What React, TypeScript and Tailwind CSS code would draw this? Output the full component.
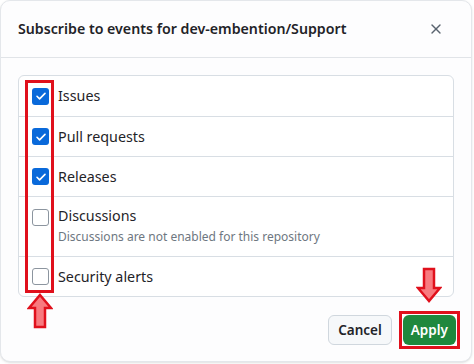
import { X } from "lucide-react";

const items = [
  { label: "Issues", checked: true },
  { label: "Pull requests", checked: true },
  { label: "Releases", checked: true },
  { label: "Discussions", checked: false, note: "Discussions are not enabled for this repository" },
  { label: "Security alerts", checked: false },
];

const Box = ({ checked }: { checked: boolean }) =>
  checked ? (
    <span className="flex h-[17px] w-[17px] shrink-0 items-center justify-center rounded-[3px] bg-[#0969da]">
      <svg width="12" height="12" viewBox="0 0 12 12" fill="none">
        <path d="M2 6.3l2.6 2.6L10 3.4" stroke="white" strokeWidth="1.6" strokeLinecap="round" strokeLinejoin="round" />
      </svg>
    </span>
  ) : (
    <span className="block h-[17px] w-[17px] shrink-0 rounded-[3px] border border-[#8c959f] bg-white" />
  );

const Arrow = ({ down }: { down?: boolean }) => (
  <svg width="26" height="36" viewBox="0 0 26 36" className={down ? "rotate-180" : ""}>
    <path d="M13 2L24 15H18V34H8V15H2Z" fill="#f87a7f" stroke="#e0101c" strokeWidth="2.5" strokeLinejoin="miter" />
  </svg>
);

export default function App() {
  return (
    <div className="h-[364px] w-[474px] bg-white font-['Noto_Sans',sans-serif] text-[#1f2328]">
      <div className="relative flex h-[362px] w-[472px] flex-col overflow-hidden rounded-[10px] border border-[#e4e7eb] bg-[#fdfdfe] shadow-sm">
        <div className="flex h-[57px] shrink-0 items-center justify-between border-b border-[#e1e4e8] pl-[17px] pr-[27px]">
          <h2 className="text-[14.2px] font-semibold">Subscribe to events for dev-embention/Support</h2>
          <X className="h-[16px] w-[16px] text-[#59636e]" strokeWidth={2} />
        </div>
        <div className="px-[17px] pt-[17px]">
          <div className="relative rounded-[6px] border border-[#d8dee4] bg-white">
            {items.map((it, i) => (
              <div
                key={it.label}
                className={`flex gap-[9px] pl-[13px] ${it.note ? "h-[60px] items-start pt-[10px]" : "h-[40px] items-center"} ${i > 0 ? "border-t border-[#d8dee4]" : ""}`}
              >
                <div className={it.note ? "pt-[2px]" : ""}>
                  <Box checked={it.checked} />
                </div>
                <div className="leading-tight">
                  <div className="text-[14.3px]">{it.label}</div>
                  {it.note && <div className="mt-[4px] text-[12px] text-[#6e7781]">{it.note}</div>}
                </div>
              </div>
            ))}
            <div className="absolute left-[6px] top-[4px] h-[213px] w-[29px] border-[3px] border-[#e0101c]" />
          </div>
        </div>
        <div className="relative flex flex-1 items-center justify-end gap-[7px] pr-[11px] pt-[2px]">
          <button className="h-[30px] rounded-[6px] border border-[#d0d7de] bg-[#f6f8fa] px-[9px] text-[13.5px] font-semibold">Cancel</button>
          <div className="border-[3px] border-[#e0101c] p-[1px]">
            <button className="h-[30px] rounded-[6px] bg-[#1f883d] px-[8px] text-[13.5px] font-semibold text-white">Apply</button>
          </div>
          <div className="absolute left-[26px] top-[-4px]">
            <Arrow />
          </div>
          <div className="absolute right-[29px] top-[-30px]">
            <Arrow down />
          </div>
        </div>
      </div>
    </div>
  );
}
